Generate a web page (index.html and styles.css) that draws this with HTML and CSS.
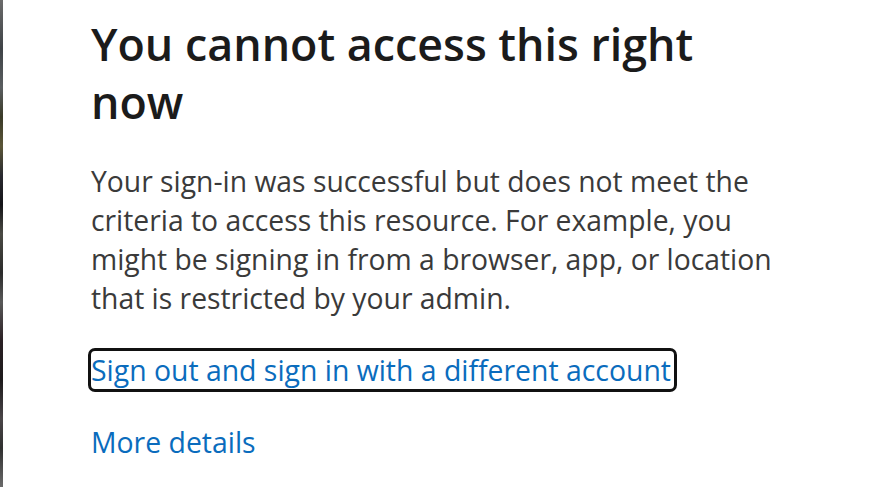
FILE: index.html
```html
<!DOCTYPE html>
<html lang="en">
<head>
<meta charset="utf-8">
<title>You cannot access this right now</title>
<link rel="stylesheet" href="styles.css">
</head>
<body>
<div class="page">
  <div class="edge"></div>
  <main class="content">
    <h1 class="title">You cannot access this right now</h1>
    <p class="message">Your sign-in was successful but does not meet the criteria to access this resource. For example, you might be signing in from a browser, app, or location that is restricted by your admin.</p>
    <div class="actions">
      <a class="link link-focused" href="#">Sign out and sign in with a different account</a>
      <a class="link" href="#">More details</a>
    </div>
  </main>
</div>
</body>
</html>
```
FILE: styles.css
```css
html, body {
  margin: 0;
  padding: 0;
  background: #ffffff;
}

.page {
  display: flex;
  width: 880px;
  height: 487px;
  overflow: hidden;
}

.edge {
  flex: 0 0 3px;
  background: linear-gradient(180deg,
    #6b6b6b 0%, #3f4347 10%, #5a5e60 18%, #3a3a28 24%, #5b5638 30%,
    #2a2a30 36%, #141418 42%, #4a4a44 48%, #2b2b2b 56%, #595959 62%,
    #2a2024 70%, #1d1a1c 78%, #4a4648 86%, #303030 92%, #6a6a6a 100%);
}

.content {
  flex: 1;
  padding: 15px 0 0 88px;
  font-family: "Open Sans", "Noto Sans", sans-serif;
}

.title {
  margin: 0;
  width: 640px;
  font-size: 44.8px;
  line-height: 58px;
  font-weight: 600;
  color: #1b1b1b;
}

.message {
  margin: 31px 0 0;
  width: 692px;
  font-size: 28.3px;
  line-height: 39px;
  color: #3a3a3a;
}

.actions {
  display: flex;
  flex-direction: column;
  align-items: flex-start;
  gap: 34px;
  margin-top: 33px;
}

.link {
  font-size: 28.4px;
  line-height: 38px;
  color: #0a6cbd;
  text-decoration: none;
}

.link-focused {
  display: inline-block;
  outline: 3px solid #111111;
  border-radius: 4px;
  padding-right: 3px;
}
```
